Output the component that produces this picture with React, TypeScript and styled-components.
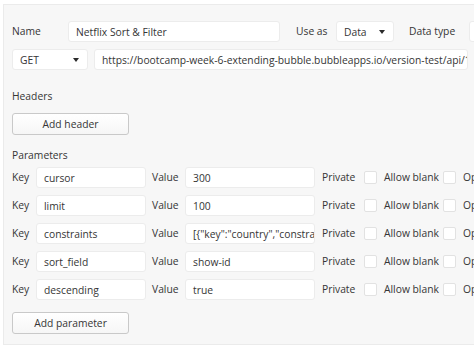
import React from "react";
import styled, { createGlobalStyle } from "styled-components";

const GlobalStyle = createGlobalStyle`
  html, body {
    margin: 0;
    padding: 0;
    background: #ffffff;
    overflow: hidden;
  }
  body {
    font-family: "Open Sans", "Liberation Sans", sans-serif;
    font-size: 10.3px;
    color: #353535;
  }
`;

const params = [
  { key: "cursor", value: "300" },
  { key: "limit", value: "100" },
  { key: "constraints", value: '[{"key":"country","constraint_type":"equals"}]' },
  { key: "sort_field", value: "show-id" },
  { key: "descending", value: "true" },
];

const App: React.FC = () => {
  return (
    <>
      <GlobalStyle />
      <Panel>
        <Row>
          <Label width={56}>Name</Label>
          <Field width={212}>Netflix Sort &amp; Filter</Field>
          <Label width={40} gap={16}>Use as</Label>
          <Dropdown width={58}>
            Data
            <Arrow />
          </Dropdown>
          <Label width={60} gap={15}>Data type</Label>
          <Field width={60} />
        </Row>
        <Row top={7}>
          <Dropdown width={76}>
            GET
            <Arrow />
          </Dropdown>
          <Field width={374} gap={6}>
            https://bootcamp-week-6-extending-bubble.bubbleapps.io/version-test/api/1.1/obj/show
          </Field>
        </Row>
        <SectionTitle top={17}>Headers</SectionTitle>
        <Button>Add header</Button>
        <SectionTitle top={11}>Parameters</SectionTitle>
        <ParamList>
          {params.map((p) => (
            <Row key={p.key}>
              <Label width={24}>Key</Label>
              <Field width={110}>{p.key}</Field>
              <Label width={33} gap={6}>Value</Label>
              <Field width={130}>{p.value}</Field>
              <Label width={42} gap={7}>Private</Label>
              <Checkbox />
              <Label width={59} gap={7}>Allow blank</Label>
              <Checkbox />
              <Label width={60} gap={7}>Optional</Label>
            </Row>
          ))}
        </ParamList>
        <Button top={12}>Add parameter</Button>
      </Panel>
    </>
  );
};

const Panel = styled.div`
  margin: 4px 0 0 3px;
  width: 700px;
  height: 341px;
  box-sizing: border-box;
  background: #f7f7f7;
  border: 1px solid #ebebeb;
  border-right: none;
  padding: 16px 0 0 8px;
`;

const Row = styled.div<{ top?: number }>`
  display: flex;
  align-items: center;
  height: 21px;
  margin-top: ${(p) => p.top || 0}px;
  white-space: nowrap;
`;

const Label = styled.span<{ width: number; gap?: number }>`
  flex: none;
  width: ${(p) => p.width}px;
  margin-left: ${(p) => p.gap || 0}px;
  line-height: 21px;
`;

const Field = styled.div<{ width: number; gap?: number }>`
  flex: none;
  box-sizing: border-box;
  width: ${(p) => p.width}px;
  height: 21px;
  margin-left: ${(p) => p.gap || 0}px;
  padding: 0 7px;
  line-height: 20px;
  background: #ffffff;
  border: 1px solid #ececec;
  border-radius: 3px;
  overflow: hidden;
  white-space: nowrap;
`;

const Dropdown = styled(Field)`
  display: flex;
  align-items: center;
  justify-content: space-between;
  padding: 0 8px 0 7px;
`;

const Arrow = styled.span`
  width: 0;
  height: 0;
  border-left: 3.5px solid transparent;
  border-right: 3.5px solid transparent;
  border-top: 4px solid #2a2a2a;
`;

const SectionTitle = styled.div<{ top: number }>`
  margin-top: ${(p) => p.top}px;
  line-height: 18px;
`;

const Button = styled.button<{ top?: number }>`
  display: block;
  box-sizing: border-box;
  width: 117px;
  height: 22px;
  margin-top: ${(p) => p.top || 8}px;
  padding: 0;
  font-family: inherit;
  font-size: 10.3px;
  color: #353535;
  background: linear-gradient(#ffffff, #f6f6f6);
  border: 1px solid #c9c9c9;
  border-radius: 3px;
`;

const ParamList = styled.div`
  display: flex;
  flex-direction: column;
  gap: 7px;
  margin-top: 3px;
`;

const Checkbox = styled.span`
  flex: none;
  box-sizing: border-box;
  width: 13px;
  height: 13px;
  background: #ffffff;
  border: 1px solid #e2e2e2;
  border-radius: 2px;
`;

export default App;
